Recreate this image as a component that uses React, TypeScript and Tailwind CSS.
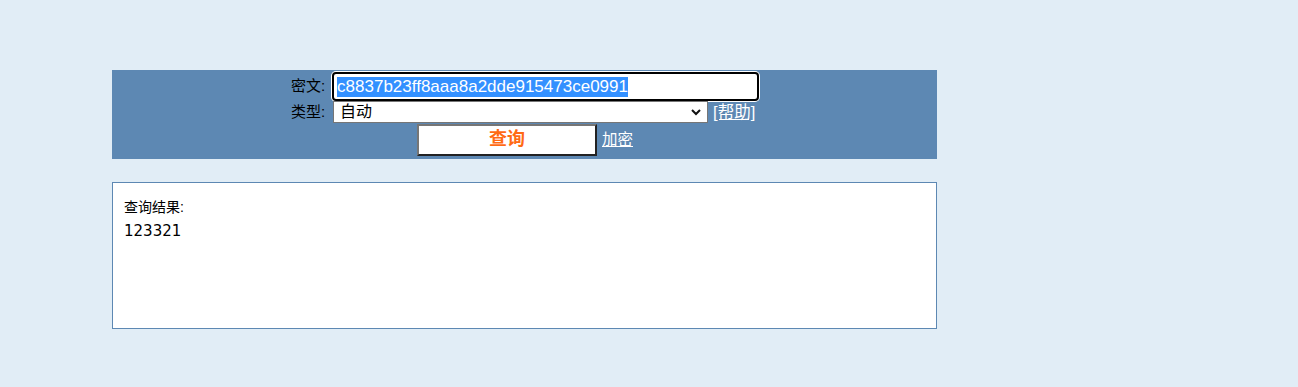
import React from "react";

const App = () => {
  return (
    <div className="w-[1298px] h-[387px] bg-[#e1edf6] pt-[70px] pl-[112px] font-['Liberation_Sans','Noto_Sans_CJK_SC',sans-serif] text-[14px] text-black">
      <div className="w-[825px] h-[89px] bg-[#5d88b3] flex flex-col items-center pt-[2px]">
        <div className="grid grid-cols-[auto_auto] items-center gap-x-[7px] text-[15px] pl-[1px]">
          <span className="text-right">密文:</span>
          <div className="w-[427px] h-[29px] rounded-[4px] border-2 border-black bg-white ring-1 ring-white flex items-center px-[3px]">
            <span className="bg-[#3390ff] text-white text-[17px] leading-[20px]">c8837b23ff8aaa8a2dde915473ce0991</span>
          </div>
          <span className="text-right">类型:</span>
          <div className="flex items-center pl-[1px]">
            <div className="w-[375px] h-[22px] bg-white border border-[#767676] flex items-center justify-between pl-[6px] pr-[4px] text-[16px]">
              <span>自动</span>
              <svg width="14" height="14" viewBox="0 0 14 14"><path d="M3 5l4 4 4-4" fill="none" stroke="#111" strokeWidth="2" /></svg>
            </div>
            <a className="ml-[5px] text-white underline text-[16.5px] leading-[20px]">[帮助]</a>
          </div>
        </div>
        <div className="flex items-center pl-[1px]">
          <button className="w-[180px] h-[32px] bg-white border-2 border-t-[#767676] border-l-[#767676] border-r-[#222] border-b-[#222] text-[#ff6a14] font-bold text-[18px]">查询</button>
          <a className="ml-[5px] text-white underline text-[15.5px]">加密</a>
        </div>
      </div>
      <div className="w-[825px] h-[147px] mt-[23px] bg-white border border-[#5d88b3] px-[11px] pt-[13px] text-[14px]">
        <div className="leading-[23px]">查询结果:</div>
        <div className="leading-[23px] font-['DejaVu_Sans',sans-serif] text-[15px] pt-[1px]">123321</div>
      </div>
    </div>
  );
};

export default App;
